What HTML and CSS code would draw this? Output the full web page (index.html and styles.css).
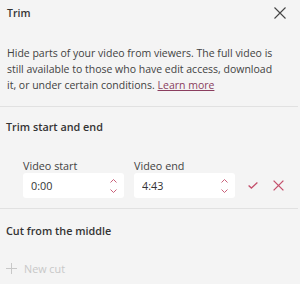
FILE: index.html
```html
<!DOCTYPE html>
<html lang="en">
<head>
    <meta charset="UTF-8">
    <meta name="viewport" content="width=device-width, initial-scale=1.0">
    <title>Trim</title>
    <link rel="stylesheet" href="styles.css">
</head>
<body>
    <div class="panel">
        <div class="panel-header">
            <h2>Trim</h2>
            <button class="close-btn" aria-label="Close">
                <svg width="12" height="12" viewBox="0 0 12 12"><path d="M0.5 0.5 L11.5 11.5 M11.5 0.5 L0.5 11.5" stroke="#444" stroke-width="1.1" fill="none"/></svg>
            </button>
        </div>

        <p class="intro">Hide parts of your video from viewers. The full video is still available to those who have edit access, download it, or under certain conditions. <a href="#">Learn more</a></p>

        <div class="section">
            <h3>Trim start and end</h3>
            <div class="trim-row">
                <div class="field">
                    <label for="start">Video start</label>
                    <div class="time-input">
                        <input type="text" id="start" value="0:00">
                        <div class="spin">
                            <svg width="7" height="4" viewBox="0 0 7 4"><path d="M0.5 3.5 L3.5 0.5 L6.5 3.5" stroke="#c9617a" fill="none"/></svg>
                            <svg width="7" height="4" viewBox="0 0 7 4"><path d="M0.5 0.5 L3.5 3.5 L6.5 0.5" stroke="#c9617a" fill="none"/></svg>
                        </div>
                    </div>
                </div>
                <div class="field">
                    <label for="end">Video end</label>
                    <div class="time-input">
                        <input type="text" id="end" value="4:43">
                        <div class="spin">
                            <svg width="7" height="4" viewBox="0 0 7 4"><path d="M0.5 3.5 L3.5 0.5 L6.5 3.5" stroke="#c9617a" fill="none"/></svg>
                            <svg width="7" height="4" viewBox="0 0 7 4"><path d="M0.5 0.5 L3.5 3.5 L6.5 0.5" stroke="#c9617a" fill="none"/></svg>
                        </div>
                    </div>
                </div>
                <div class="actions">
                    <svg class="ok" width="10" height="7" viewBox="0 0 10 7"><path d="M0.6 3.4 L3.4 6 L9.4 0.6" stroke="#c4506c" stroke-width="1.3" fill="none"/></svg>
                    <svg class="cancel" width="11" height="11" viewBox="0 0 11 11"><path d="M0.6 0.6 L10.4 10.4 M10.4 0.6 L0.6 10.4" stroke="#c4506c" stroke-width="1.3" fill="none"/></svg>
                </div>
            </div>
        </div>

        <div class="section">
            <h3 class="cut-title">Cut from the middle</h3>
            <div class="new-cut">
                <svg width="11" height="11" viewBox="0 0 11 11"><path d="M5.5 0 V11 M0 5.5 H11" stroke="#c8c8c8" stroke-width="1" fill="none"/></svg>
                <span>New cut</span>
            </div>
        </div>
    </div>
</body>
</html>
```

FILE: styles.css
```css
body, h2, h3, p {
    margin: 0;
    padding: 0;
}

body {
    font-family: "Open Sans", "Noto Sans", sans-serif;
    background-color: #f4f4f4;
    color: #333;
}

.panel {
    width: 300px;
}

.panel-header {
    display: flex;
    justify-content: space-between;
    align-items: center;
    height: 26px;
    padding: 0 14px 0 7px;
}

.panel-header h2 {
    font-size: 10.5px;
    font-weight: 600;
    color: #333;
}

.close-btn {
    background: none;
    border: none;
    padding: 0;
    display: flex;
    cursor: pointer;
}

.intro {
    margin-top: 19px;
    padding: 0 22px 0 7px;
    font-size: 10.5px;
    line-height: 16px;
    color: #424242;
}

.intro a {
    color: #8a3d5e;
}

.section {
    border-top: 1px solid #e1e1e1;
    margin-right: 2px;
}

.intro + .section {
    margin-top: 13px;
}

.section h3 {
    font-size: 10.8px;
    font-weight: 600;
    color: #333;
    padding: 13px 6px 0;
    line-height: 14px;
}

.section h3.cut-title {
    padding-top: 15px;
}

.trim-row {
    display: flex;
    align-items: flex-end;
    gap: 10px;
    padding: 25px 0 10px 23px;
}

.field {
    display: flex;
    flex-direction: column;
}

.field label {
    font-size: 10.8px;
    color: #424242;
    line-height: 14px;
}

.time-input {
    display: flex;
    align-items: center;
    width: 101px;
    height: 25px;
    background-color: #fff;
    border-radius: 3px;
    box-sizing: border-box;
    padding: 0 7px 0 8px;
}

.time-input input {
    flex: 1;
    width: 0;
    border: none;
    outline: none;
    padding: 0;
    font-family: inherit;
    font-size: 10.8px;
    color: #333;
    background: transparent;
}

.spin {
    display: flex;
    flex-direction: column;
    gap: 6px;
}

.actions {
    display: flex;
    align-items: center;
    gap: 15px;
    height: 25px;
    padding-left: 3px;
}

.new-cut {
    display: flex;
    align-items: center;
    gap: 7px;
    padding: 23px 6px 0;
    font-size: 10.8px;
    color: #c8c8c8;
}
```
